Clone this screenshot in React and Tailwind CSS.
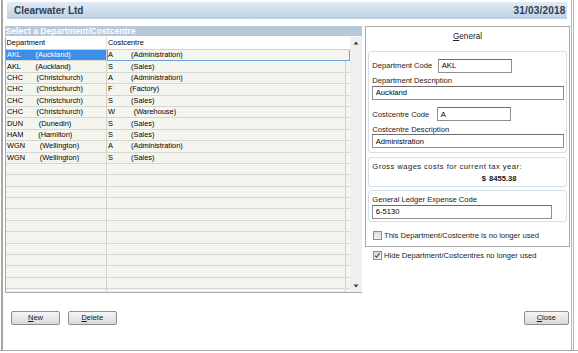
import React from "react";

const rows = [
  { c: "AKL", d: "(Auckland)", w: 28.5, cc: "A", ccd: "(Administration)", cw: 23, sel: true },
  { c: "AKL", d: "(Auckland)", w: 28.5, cc: "S", ccd: "(Sales)", cw: 23 },
  { c: "CHC", d: "(Christchurch)", w: 29.5, cc: "A", ccd: "(Administration)", cw: 23 },
  { c: "CHC", d: "(Christchurch)", w: 29.5, cc: "F", ccd: "(Factory)", cw: 21.7 },
  { c: "CHC", d: "(Christchurch)", w: 29.5, cc: "S", ccd: "(Sales)", cw: 23 },
  { c: "CHC", d: "(Christchurch)", w: 29.5, cc: "W", ccd: "(Warehouse)", cw: 25.7 },
  { c: "DUN", d: "(Dunedin)", w: 31.8, cc: "S", ccd: "(Sales)", cw: 23 },
  { c: "HAM", d: "(Hamilton)", w: 31.2, cc: "S", ccd: "(Sales)", cw: 23 },
  { c: "WGN", d: "(Wellington)", w: 32.8, cc: "A", ccd: "(Administration)", cw: 23 },
  { c: "WGN", d: "(Wellington)", w: 32.8, cc: "S", ccd: "(Sales)", cw: 23 },
];

function Row({ r }) {
  if (!r) {
    return (
      <div className="h-[11.4px] flex border-b border-[#d6d6d2] bg-[#f5f5f0]">
        <div className="w-[101px] border-r border-[#cfcfcb]" />
        <div className="w-[239px] border-r border-[#cfcfcb]" />
        <div className="flex-1" />
      </div>
    );
  }
  return (
    <div className="h-[11.4px] flex border-b border-[#d6d6d2] bg-[#f5f5f0] text-[7.4px] leading-[10px]">
      <div
        className={
          "w-[101px] border-r border-[#cfcfcb] flex items-center pl-[1px] whitespace-nowrap " +
          (r.sel ? "bg-[#3d8fe8] text-white" : "text-black")
        }
      >
        <span className="inline-block shrink-0" style={{ width: r.w }}>{r.c}</span>
        <span>{r.d}</span>
      </div>
      {r.sel ? (
        <div className="w-[243px] -mt-[1px] h-[12.4px] border border-[#6da3dc] border-t-[#555] flex items-center pl-[0px] whitespace-nowrap text-black">
          <span className="inline-block shrink-0" style={{ width: r.cw }}>{r.cc}</span>
          <span>{r.ccd}</span>
        </div>
      ) : (
        <>
          <div className="w-[239px] border-r border-[#cfcfcb] flex items-center pl-[1px] whitespace-nowrap text-black">
            <span className="inline-block shrink-0" style={{ width: r.cw }}>{r.cc}</span>
            <span>{r.ccd}</span>
          </div>
          <div className="flex-1" />
        </>
      )}
    </div>
  );
}

function Btn({ first, rest, w }) {
  return (
    <div
      className="h-[14.5px] rounded-[2px] border border-[#8c8c8c] bg-linear-to-b from-[#f6f6f6] to-[#d9d9d9] flex items-center justify-center text-[7.5px] text-[#1a1a1a]"
      style={{ width: w }}
    >
      <span className="underline underline-offset-[1px]">{first}</span>
      <span>{rest}</span>
    </div>
  );
}

function Input({ value, w }) {
  return (
    <div
      className="h-[14px] border border-[#8f8f8f] border-t-[#6e6e6e] bg-white flex items-center pl-[2.5px] text-[7.6px] text-black shrink-0"
      style={{ width: w }}
    >
      {value}
    </div>
  );
}

function Check({ checked, label }) {
  return (
    <div className="flex items-center h-[9px]">
      <div className="w-[8.5px] h-[8.5px] border border-[#8e8f8f] bg-linear-to-b from-[#dcdcdc] to-[#f2f2f2] flex items-center justify-center">
        {checked && (
          <svg width="7" height="7" viewBox="0 0 7 7">
            <path d="M1 3.6 L2.7 5.4 L6 1" fill="none" stroke="#2c56a8" strokeWidth="1.3" />
          </svg>
        )}
      </div>
      <span className="ml-[2.5px] text-[7.6px] text-[#1a1a1a] whitespace-nowrap">{label}</span>
    </div>
  );
}

export default function App() {
  const all = [...rows, ...Array(12).fill(null)];
  return (
    <div className="w-[578px] h-[353px] bg-white overflow-hidden font-['Liberation_Sans',Arial,sans-serif]">
      <div className="h-[351px] flex border-b border-[#a7a7a7]">
        <div className="w-[1px]" />
        <div className="w-[2px] bg-[#a5a5a5]" />
        <div className="w-[568px] flex flex-col">
          {/* title bar */}
          <div className="mt-[2px] ml-[4px] w-[560px] h-[17px] bg-linear-to-b from-[#e2ebf5] to-[#bccfe3] flex items-center justify-between pl-[7px] pr-[1.5px] text-[10px] font-bold text-[#2f3e50]">
            <span>Clearwater Ltd</span>
            <span className="tracking-[0.2px]">31/03/2018</span>
          </div>

          <div className="mt-[7px] flex">
            {/* left panel */}
            <div className="ml-[2px] w-[357px] flex flex-col">
              <div className="h-[10px] bg-[#b7c8da] text-white font-bold text-[8.6px] leading-[10px] pl-[0.5px] whitespace-nowrap">
                Select a Department/Costcentre
              </div>
              <div className="mt-[1px] flex h-[256px] border-l border-b border-[#a9a9a9]">
                <div className="w-[344px] flex flex-col">
                  <div className="h-[13px] flex border-b border-[#d0d0d0] bg-white text-[7.4px] text-black items-center">
                    <div className="w-[101px] pl-[0.5px] h-full flex items-center border-r border-[#e2e2e2]">Department</div>
                    <div className="pl-[1px]">Costcentre</div>
                  </div>
                  <div className="flex-1 overflow-hidden">
                    {all.map((r, i) => (
                      <Row key={i} r={r} />
                    ))}
                  </div>
                </div>
                <div className="w-[12px] bg-[#efefef] flex flex-col items-center justify-between py-[4px]">
                  <svg width="6" height="4" viewBox="0 0 6 4">
                    <path d="M0.5 3.5 L3 0.5 L5.5 3.5 Z" fill="#404040" />
                  </svg>
                  <svg width="6" height="4" viewBox="0 0 6 4">
                    <path d="M0.5 0.5 L3 3.5 L5.5 0.5 Z" fill="#404040" />
                  </svg>
                </div>
              </div>
            </div>

            {/* right column */}
            <div className="ml-[3px] w-[205px] flex flex-col">
              <div className="h-[221px] border border-[#a9a9a9] flex flex-col">
                <div className="h-[24px] flex items-start justify-center pt-[4px] text-[8.2px] text-[#222]">
                  <span className="underline underline-offset-[1px]">G</span>eneral
                </div>
                {/* group 1 */}
                <div className="ml-[2px] mr-[2.5px] h-[102px] border border-[#d6e0ea] rounded-[3px] flex flex-col pl-[3.3px] pt-[6.6px] text-[7.6px] text-[#1a1a1a]">
                  <div className="flex items-center h-[14px]">
                    <span className="w-[66px] shrink-0 whitespace-nowrap">Department Code</span>
                    <Input value="AKL" w={73.4} />
                  </div>
                  <div className="mt-[3.5px] h-[9px] leading-[9px] mb-[0.5px] whitespace-nowrap">Department Description</div>
                  <Input value="Auckland" w={191.7} />
                  <div className="mt-[7.8px] flex items-center h-[14px]">
                    <span className="w-[65px] shrink-0 whitespace-nowrap">Costcentre Code</span>
                    <Input value="A" w={73.4} />
                  </div>
                  <div className="mt-[3.5px] h-[9px] leading-[9px] mb-[0.5px] whitespace-nowrap">Costcentre Description</div>
                  <Input value="Administration" w={191.7} />
                </div>
                {/* group 2 */}
                <div className="mt-[4px] ml-[2px] mr-[2.5px] h-[29.5px] border border-[#d6e0ea] rounded-[3px] flex flex-col pl-[3.3px] pt-[4px] text-[7.6px] text-[#1a1a1a]">
                  <div className="h-[9px] leading-[9px] whitespace-nowrap tracking-[0.45px]">Gross wages costs for current tax year:</div>
                  <div className="mt-[3px] h-[9px] leading-[9px] pl-[109.5px] font-bold whitespace-nowrap">
                    $<span className="ml-[3px]">8455.38</span>
                  </div>
                </div>
                {/* group 3 */}
                <div className="mt-[3.5px] ml-[2px] mr-[2.5px] h-[32px] border border-[#d6e0ea] rounded-[3px] flex flex-col pl-[3.3px] pt-[4.3px] text-[7.6px] text-[#1a1a1a]">
                  <div className="h-[9px] leading-[9px] whitespace-nowrap">General Ledger Expense Code</div>
                  <div className="mt-[0.5px]">
                    <Input value="6-5130" w={179.4} />
                  </div>
                </div>
                <div className="mt-[9px] ml-[7px]">
                  <Check label="This Department/Costcentre is no longer used" />
                </div>
              </div>
              <div className="mt-[4px] ml-[8px]">
                <Check checked label="Hide Department/Costcentres no longer used" />
              </div>
            </div>
          </div>

          {/* buttons */}
          <div className="mt-[17.5px] flex items-center pl-[8px] pr-[2px]">
            <Btn first="N" rest="ew" w={49} />
            <div className="ml-[8px]">
              <Btn first="D" rest="elete" w={48.5} />
            </div>
            <div className="ml-auto">
              <Btn first="C" rest="lose" w={45.5} />
            </div>
          </div>
        </div>
        <div className="w-[1px] bg-[#b5b5b5]" />
        <div className="w-[1px] bg-white" />
        <div className="w-[1px] bg-[#b5b5b5]" />
      </div>
    </div>
  );
}
